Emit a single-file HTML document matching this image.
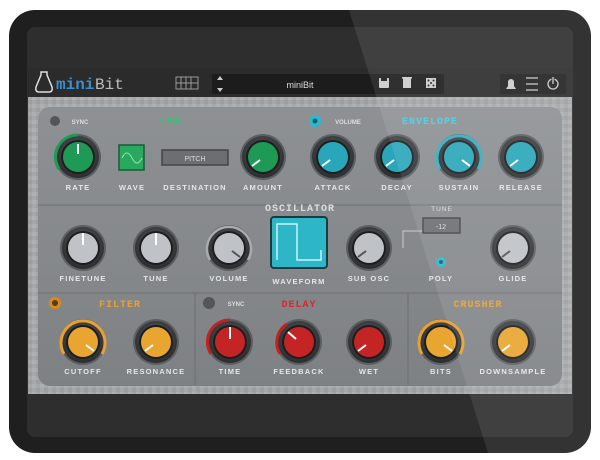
<!DOCTYPE html>
<html><head><style>
html,body{margin:0;padding:0;background:#fff;width:600px;height:460px;overflow:hidden}
svg{display:block}
text{font-family:"Liberation Sans",sans-serif}
.l{font-size:7.5px;fill:#e4e6e8;letter-spacing:1.2px;text-anchor:middle;font-weight:bold}
.t{font-family:"Liberation Mono",monospace;font-size:10px;font-weight:bold;letter-spacing:1px;text-anchor:middle}
</style></head><body>
<svg width="600" height="460" viewBox="0 0 600 460">
<defs>
<radialGradient id="rg" cx="50%" cy="40%" r="60%"><stop offset="0" stop-color="#5a5c5e"/><stop offset="1" stop-color="#2a2c2e"/></radialGradient>
<linearGradient id="pg" x1="0" y1="0" x2="0" y2="1"><stop offset="0" stop-color="#8e9194"/><stop offset="1" stop-color="#7e8184"/></linearGradient>
<g id="ring"><circle r="23" fill="#5c5f62"/><circle r="21" fill="url(#rg)"/><circle r="17" fill="#1c1d1f"/></g>
<pattern id="tex" width="8" height="8" patternUnits="userSpaceOnUse"><rect width="8" height="8" fill="#a5a7a9"/><rect width="4" height="4" fill="#adafb1"/><rect x="4" y="4" width="4" height="4" fill="#9c9ea0"/></pattern>
</defs>
<rect x="9" y="10" width="582" height="443" rx="26" fill="#1f1f1f"/>
<rect x="27" y="27" width="546" height="410" rx="8" fill="#2e2e2e"/>
<!-- header -->
<rect x="28" y="68" width="544" height="29" fill="#2b2b2b"/>
<path d="M41 72h6v3l5 12q1 5-3 5h-10q-4 0-3-5l5-12z" fill="none" stroke="#ddd" stroke-width="1.5"/>
<text x="56" y="89" style="font-family:'Liberation Mono',monospace;font-size:16px;font-weight:bold" fill="#3a8fd0">mini</text>
<text x="95" y="89" style="font-family:'Liberation Mono',monospace;font-size:16px" fill="#bbb">Bit</text>
<rect x="176" y="77" width="22" height="12" fill="none" stroke="#999" stroke-width="1"/>
<path d="M181 77v12M186 77v12M191 77v12M176 83h22" stroke="#999" stroke-width="1"/>
<rect x="212" y="74" width="232" height="20" rx="2" fill="#1c1c1c"/>
<path d="M217 80l3-4 3 4zM217 88l3 4 3-4z" fill="#ccc"/>
<text x="300" y="88" font-size="9" fill="#ddd" text-anchor="middle">miniBit</text>
<rect x="379" y="78" width="10" height="10" rx="1" fill="#ccc"/><rect x="381" y="78" width="6" height="3" fill="#1c1c1c"/>
<rect x="403" y="78" width="8" height="10" fill="#ccc"/><rect x="402" y="77" width="10" height="1.5" fill="#ccc"/>
<rect x="426" y="78" width="10" height="10" fill="#ccc"/><circle cx="428.5" cy="80.5" r="1" fill="#222"/><circle cx="433.5" cy="80.5" r="1" fill="#222"/><circle cx="431" cy="83" r="1" fill="#222"/><circle cx="428.5" cy="85.5" r="1" fill="#222"/><circle cx="433.5" cy="85.5" r="1" fill="#222"/>
<rect x="500" y="74" width="66" height="20" rx="2" fill="#222"/>
<path d="M506 89h10l-2-3v-4a3 3 0 0 0-6 0v4z" fill="#ccc"/>
<path d="M526 78h12M526 84h12M526 90h12" stroke="#ccc" stroke-width="1.3"/>
<circle cx="553" cy="84" r="5" fill="none" stroke="#ccc" stroke-width="1.3"/><path d="M553 77v7" stroke="#222" stroke-width="3"/><path d="M553 77v7" stroke="#ccc" stroke-width="1.3"/>
<!-- body -->
<rect x="28" y="97" width="544" height="297" fill="url(#tex)"/>
<rect x="38" y="107" width="524" height="279" rx="12" fill="url(#pg)"/>
<path d="M38 205h524M38 293h524M195 293v92M408 293v92" stroke="#6c6f72" stroke-width="1"/>
<!-- top row -->
<circle cx="55" cy="121" r="5" fill="#555"/><text x="80" y="124" font-size="6" fill="#ddd" text-anchor="middle" font-weight="bold">SYNC</text>
<text class="t" x="170" y="124" fill="#1fcf70" font-size="9">LFO</text>
<circle cx="315" cy="121" r="6" fill="#2bb8d0"/><circle cx="315" cy="121" r="2.5" fill="#1a5f70"/>
<text x="348" y="124" font-size="6" fill="#ddd" text-anchor="middle" font-weight="bold">VOLUME</text>
<text class="t" x="430" y="124" fill="#3fd0e8">ENVELOPE</text>
<g transform="translate(78,157)"><use href="#ring"/><path d="M-19 12A22 22 0 0 1 0 -22" stroke="#1f9a55" stroke-width="3" fill="none"/><circle r="15" fill="#1e9a55"/><path d="M0 -3v-10" stroke="#fff" stroke-width="2"/></g>
<rect x="119" y="145" width="25" height="25" fill="#2aa860" stroke="#1a5a34" stroke-width="1.5"/>
<path d="M122 158q5-10 10 0t10 0" stroke="#8ee8b0" fill="none"/>
<rect x="162" y="150" width="66" height="15" fill="#6c6f72" stroke="#444" stroke-width="1.5"/>
<text x="195" y="161" font-size="7" fill="#ddd" text-anchor="middle">PITCH</text>
<g transform="translate(263,157)"><use href="#ring"/><circle r="15" fill="#1e9a55"/><path d="M-3 3l-8 6" stroke="#fff" stroke-width="2"/></g>
<g transform="translate(333,157)"><use href="#ring"/><circle r="15" fill="#2aa6ba"/><path d="M-3 3l-8 6" stroke="#fff" stroke-width="2"/></g>
<g transform="translate(397,157)"><use href="#ring"/><circle r="15" fill="#2aa6ba"/><path d="M-3 3l-8 6" stroke="#fff" stroke-width="2"/></g>
<g transform="translate(459,157)"><use href="#ring"/><path d="M-19 12A22 22 0 1 1 19 12" stroke="#2bb0c4" stroke-width="3" fill="none"/><circle r="15" fill="#2aa6ba"/><path d="M3 3l8 6" stroke="#fff" stroke-width="2"/></g>
<g transform="translate(521,157)"><use href="#ring"/><circle r="15" fill="#2aa6ba"/><path d="M-3 3l-8 6" stroke="#fff" stroke-width="2"/></g>
<text class="l" x="78" y="190">RATE</text><text class="l" x="132" y="190">WAVE</text><text class="l" x="195" y="190">DESTINATION</text><text class="l" x="263" y="190">AMOUNT</text>
<text class="l" x="333" y="190">ATTACK</text><text class="l" x="397" y="190">DECAY</text><text class="l" x="459" y="190">SUSTAIN</text><text class="l" x="521" y="190">RELEASE</text>
<!-- middle row -->
<text class="t" x="300" y="211" fill="#ddd" font-weight="normal" font-size="8">OSCILLATOR</text>
<text x="442" y="211" font-size="6.5" fill="#ddd" text-anchor="middle" letter-spacing="1">TUNE</text>
<g transform="translate(83,248)"><use href="#ring"/><circle r="15" fill="#bfc3c7"/><path d="M0 -3v-12" stroke="#fff" stroke-width="2"/></g>
<g transform="translate(156,248)"><use href="#ring"/><circle r="15" fill="#bfc3c7"/><path d="M0 -3v-12" stroke="#fff" stroke-width="2"/></g>
<g transform="translate(229,248)"><use href="#ring"/><path d="M-19 12A22 22 0 1 1 19 12" stroke="#a8acb0" stroke-width="2.5" fill="none"/><circle r="15" fill="#bfc3c7"/><path d="M3 3l8 6" stroke="#555" stroke-width="2"/></g>
<rect x="271" y="217" width="56" height="51" rx="3" fill="#2db7c6" stroke="#1a3a40" stroke-width="2"/>
<path d="M277 260v-36h20v36h24v-10" stroke="#c8f4fa" stroke-width="1.5" fill="none"/>
<g transform="translate(369,248)"><use href="#ring"/><circle r="15" fill="#bfc3c7"/><path d="M-3 3l-8 6" stroke="#555" stroke-width="2"/></g>
<path d="M403 248v-17h20" stroke="#ccc" fill="none"/>
<rect x="423" y="218" width="37" height="15" fill="#6c6f72" stroke="#444" stroke-width="1.5"/>
<text x="441" y="229" font-size="7" fill="#ddd" text-anchor="middle">-12</text>
<circle cx="441" cy="262" r="5" fill="#2bb8d0"/><circle cx="441" cy="262" r="2" fill="#1a5f70"/>
<g transform="translate(513,248)"><use href="#ring"/><circle r="15" fill="#bfc3c7"/><path d="M-3 3l-8 6" stroke="#555" stroke-width="2"/></g>
<text class="l" x="83" y="281">FINETUNE</text><text class="l" x="156" y="281">TUNE</text><text class="l" x="229" y="281">VOLUME</text><text class="l" x="299" y="284">WAVEFORM</text><text class="l" x="369" y="281">SUB OSC</text><text class="l" x="441" y="281">POLY</text><text class="l" x="513" y="281">GLIDE</text>
<!-- bottom row -->
<circle cx="55" cy="303" r="6" fill="#d88a20"/><circle cx="55" cy="303" r="3" fill="#5a3a10"/>
<text class="t" x="120" y="307" fill="#e8a030">FILTER</text>
<circle cx="209" cy="303" r="6" fill="#555"/><text x="236" y="306" font-size="6" fill="#ddd" text-anchor="middle" font-weight="bold">SYNC</text>
<text class="t" x="299" y="307" fill="#d42a2a">DELAY</text>
<text class="t" x="478" y="307" fill="#e8a030">CRUSHER</text>
<g transform="translate(83,342)"><use href="#ring"/><path d="M-19 12A22 22 0 1 1 19 12" stroke="#e8a030" stroke-width="3" fill="none"/><circle r="15" fill="#e8a530"/><path d="M3 3l8 6" stroke="#fff" stroke-width="2"/></g>
<g transform="translate(156,342)"><use href="#ring"/><circle r="15" fill="#e8a530"/><path d="M-3 3l-8 6" stroke="#fff" stroke-width="2"/></g>
<g transform="translate(230,342)"><use href="#ring"/><path d="M-19 12A22 22 0 0 1 0 -22" stroke="#c42020" stroke-width="3" fill="none"/><circle r="15" fill="#c42424"/><path d="M0 -3v-12" stroke="#fff" stroke-width="2"/></g>
<g transform="translate(299,342)"><use href="#ring"/><path d="M-19 12A22 22 0 0 1 -12 -18" stroke="#c42020" stroke-width="3" fill="none"/><circle r="15" fill="#c42424"/><path d="M-3 -3l-8 -7" stroke="#fff" stroke-width="2"/></g>
<g transform="translate(369,342)"><use href="#ring"/><circle r="15" fill="#c42424"/><path d="M-3 3l-8 6" stroke="#fff" stroke-width="2"/></g>
<g transform="translate(441,342)"><use href="#ring"/><path d="M-19 12A22 22 0 1 1 19 12" stroke="#e8a030" stroke-width="3" fill="none"/><circle r="15" fill="#e8a530"/><path d="M3 3l8 6" stroke="#fff" stroke-width="2"/></g>
<g transform="translate(513,342)"><use href="#ring"/><circle r="15" fill="#e8a530"/><path d="M-3 3l-8 6" stroke="#fff" stroke-width="2"/></g>
<text class="l" x="83" y="374">CUTOFF</text><text class="l" x="156" y="374">RESONANCE</text><text class="l" x="230" y="374">TIME</text><text class="l" x="299" y="374">FEEDBACK</text><text class="l" x="369" y="374">WET</text><text class="l" x="441" y="374">BITS</text><text class="l" x="513" y="374">DOWNSAMPLE</text>
<!-- glare -->
<path d="M349 10H565Q591 10 591 36V427Q591 453 565 453H488Z" fill="#fff" opacity="0.09"/>
</svg>
</body></html>
